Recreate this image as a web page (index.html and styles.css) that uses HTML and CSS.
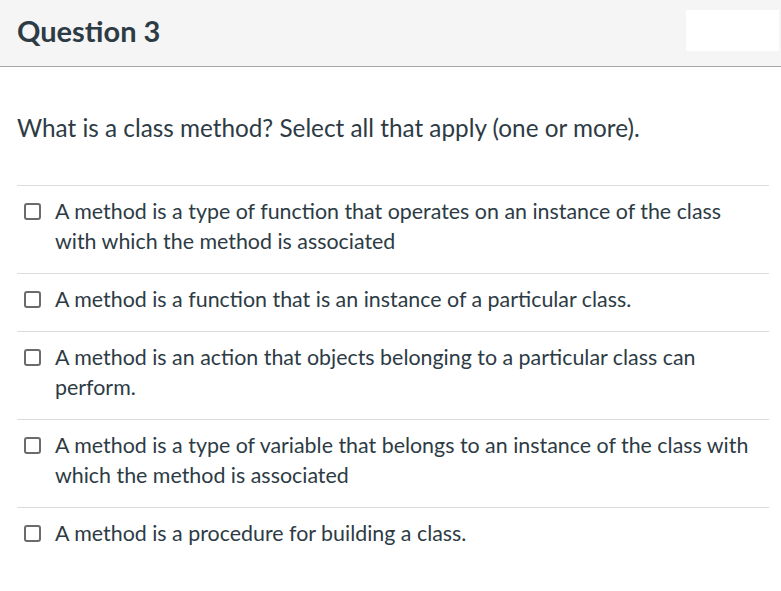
FILE: index.html
```html
<!DOCTYPE html>
<html>
<head>
<meta charset="utf-8">
<link rel="stylesheet" href="styles.css">
</head>
<body>
<div class="question">
  <div class="header">
    <h2 class="title">Question 3</h2>
    <div class="points"></div>
  </div>
  <div class="content">
    <p class="prompt">What is a class method? Select all that apply (one or more).</p>
    <div class="answers">
      <label class="answer"><span class="box"></span><span class="text">A method is a type of function that operates on an instance of the class with which the method is associated</span></label>
      <label class="answer"><span class="box"></span><span class="text">A method is a function that is an instance of a particular class.</span></label>
      <label class="answer"><span class="box"></span><span class="text">A method is an action that objects belonging to a particular class can perform.</span></label>
      <label class="answer"><span class="box"></span><span class="text">A method is a type of variable that belongs to an instance of the class with which the method is associated</span></label>
      <label class="answer"><span class="box"></span><span class="text">A method is a procedure for building a class.</span></label>
    </div>
  </div>
</div>
</body>
</html>
```
FILE: styles.css
```css
html, body {
  margin: 0;
  padding: 0;
  background: #fff;
}
body {
  font-family: Lato, "Open Sans", sans-serif;
  color: #2d3b45;
  width: 781px;
  height: 591px;
  overflow: hidden;
}
.header {
  height: 67px;
  box-sizing: border-box;
  background: #f5f5f5;
  border-bottom: 1px solid #a5a5a5;
  display: flex;
  align-items: center;
  justify-content: space-between;
  padding-left: 17px;
  padding-right: 2px;
}
.title {
  margin: 0;
  font-size: 29px;
  font-weight: 700;
  color: #2d3b45;
  line-height: 34px;
  position: relative;
  top: -2px;
}
.points {
  width: 93px;
  height: 41px;
  background: #fff;
  align-self: flex-start;
  margin-top: 10px;
}
.content {
  padding: 0 12px 0 17px;
}
.prompt {
  margin: 0;
  padding-top: 46px;
  padding-bottom: 42px;
  font-size: 24.3px;
  line-height: 30px;
}
.answers {
  display: flex;
  flex-direction: column;
}
.answer {
  display: flex;
  align-items: flex-start;
  border-top: 1px solid #dcdcdc;
  padding: 10px 0 17px 7px;
  font-size: 21.4px;
  line-height: 30px;
}
.box {
  flex: 0 0 auto;
  width: 13px;
  height: 13px;
  border: 2px solid #6b6b6b;
  border-radius: 3px;
  margin-top: 7px;
  margin-right: 14px;
  box-sizing: content-box;
}
.text {
  flex: 1;
  padding-right: 12px;
}
```
